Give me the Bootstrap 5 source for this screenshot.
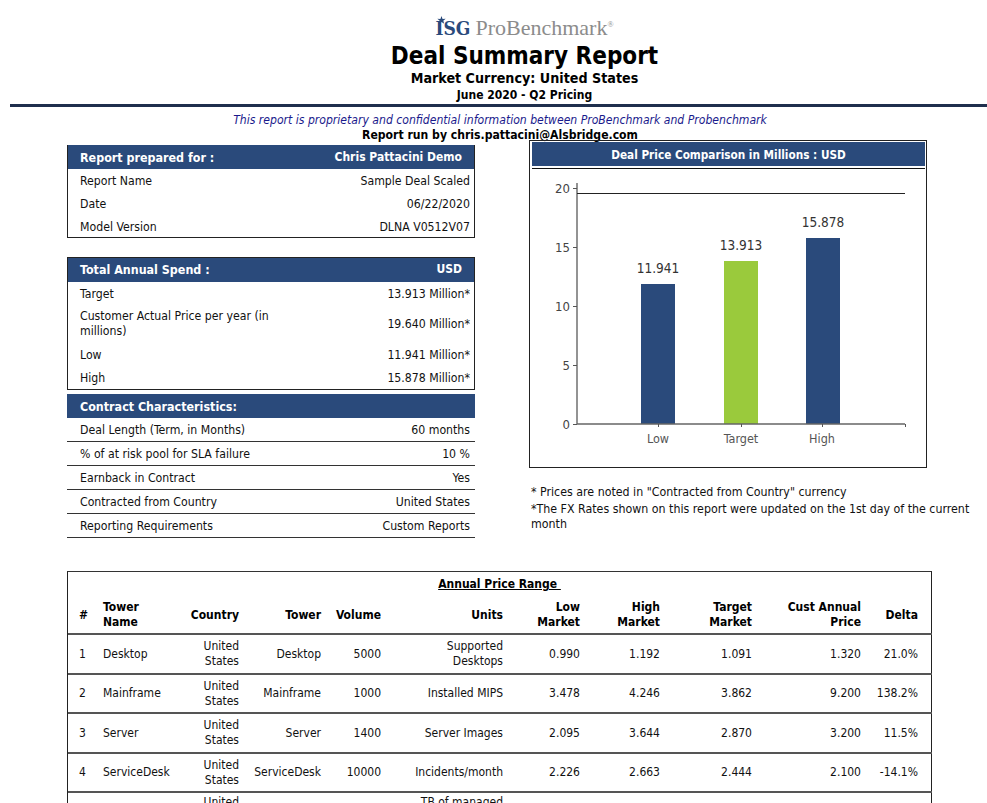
<!DOCTYPE html>
<html lang="en"><head><meta charset="utf-8"><title>Deal Summary Report</title>
<link href="https://cdn.jsdelivr.net/npm/bootstrap@5.3.0/dist/css/bootstrap.min.css" rel="stylesheet">
<style>
html,body{height:803px;overflow:hidden}
body{font-family:"DejaVu Sans Condensed","DejaVu Sans",sans-serif;font-size:12px;line-height:15px;color:#111;background:#fff}
.rep-top{padding-top:10px;padding-left:62px;text-align:center;height:104px}
.logo{height:31px;color:#8c8c8c;font:22px/36px "Liberation Serif",serif}
.logo-isg{position:relative;color:#2a4a7b;font:700 19px/36px "DejaVu Serif Condensed","DejaVu Serif",serif;margin-right:5px}
.logo-isg svg{position:absolute;left:1px;top:-1px}
.logo sup{font-size:8px;top:-1em}
.rep-title{font-size:24px;line-height:30px;font-weight:700;color:#000;margin:0;height:28px}
.rep-sub{font-size:14.2px;line-height:18px;font-weight:700;color:#000;margin:0 0 1px}
.rep-date{font-size:12px;line-height:15px;font-weight:700;color:#000;margin:0}
.rep-rule{height:3px;background:#1f2f4d;margin:0 0 6px 10px;opacity:1;border:0}
.rep-note{width:1000px;text-align:center;height:27px;font-size:12.1px}
.rep-note em{display:block;color:#1a1a8c}
.rep-note b{display:block;color:#000}
.cols{margin-left:67px;height:426px}
.left-col{width:408px;margin-top:5px}
.right-col{width:398px;margin-left:54px}
.pnl{border:1px solid #222;border-top:0}
.pnl-head{background:#2a4a7b;color:#fff;font-weight:700;padding:5px 12px 4px;height:24px}
.pnl-head span:first-child{font-size:12.4px}
.pnl-row{padding:5px 4px 3px 12px;min-height:23px;font-size:12.2px}
.pnl-row.align-items-center{padding:4px 4px 4px 12px}
.pnl-row .lbl{width:220px}
.pnl1{height:93px}
.pnl2{height:133px;margin-top:19px;border-top:1px solid #222}
.pnl2 .pnl-head{padding-top:4px}
.pnl3{margin-top:4px}
.pnl3 .pnl-head{padding-left:13px}
.pnl3 .pnl-row{border-bottom:1px solid #333;height:24px;padding:5px 5px 3px 13px}
.chart-box{border:1px solid #222;height:328px;padding:1px 1px 0 2px}
.chart-title{background:#2a4a7b;color:#fff;font-weight:700;text-align:center;height:24px;line-height:26px;margin-bottom:2px;font-size:11.7px}
.chart-line{height:1px;background:#111}
.chart-svg{display:block}
.chart-svg text{font-family:"DejaVu Sans Condensed","DejaVu Sans",sans-serif}
.foot-notes{margin-top:17px;margin-left:2px;width:450px;font-size:12.3px}
.foot-notes p{margin:0 0 2px}
.tbl-wrap{margin-left:67px;width:865px;border:1px solid #222;border-bottom:0;border-top:1px solid #333;height:300px;margin-top:5px}
.tbl-cap{height:25px;padding-top:5px;text-align:center;font-weight:700;color:#000;text-decoration:underline;white-space:pre}
.tbl-rep{table-layout:fixed;width:864px;margin:0;color:#111;--bs-table-bg:transparent}
.tbl-rep th,.tbl-rep td{padding:0;text-align:right;vertical-align:middle;border:0;border-bottom:2px solid #555;line-height:15px}
.tbl-rep th{height:37px;color:#000}
.tbl-rep tbody tr:nth-child(odd) td{height:40px}
.tbl-rep tbody tr:nth-child(even) td{height:39px}
.tbl-rep th:nth-child(-n+2),.tbl-rep td:nth-child(-n+2){text-align:left}
.tbl-rep th:first-child,.tbl-rep td:first-child{padding-left:11px}
.c1{width:35px}.c2{width:77px}.c3{width:59px}.c4{width:82px}.c5{width:60px}.c6{width:122px}.c7{width:77px}.c8{width:80px}.c9{width:92px}.c10{width:109px}.c11{width:57px}.c12{width:14px}
.tbl-rep .tc-units{padding-left:22px}
.tbl-rep .tc-ctry{padding-left:16px}
.tbl-rep td.tc-top{vertical-align:top;padding-top:2px}
</style></head><body>
<header class="rep-top">
<div class="logo"><span class="logo-isg"><svg width="9" height="9" viewBox="0 0 10 10" aria-hidden="true"><path fill="#2a4a7b" d="M5 0l1.2 3.2L9.6 3 7 5.2 8 8.6 5 6.7 2 8.6 3 5.2.4 3l3.4.2z"/></svg>ISG</span>ProBenchmark<sup>®</sup></div>
<h1 class="rep-title">Deal Summary Report</h1>
<p class="rep-sub">Market Currency: United States</p>
<p class="rep-date">June 2020 - Q2 Pricing</p>
</header>
<hr class="rep-rule">
<div class="rep-note"><em>This report is proprietary and confidential information between ProBenchmark and Probenchmark</em><b>Report run by chris.pattacini@Alsbridge.com</b></div>
<div class="cols d-flex">
<div class="left-col">
<section class="pnl pnl1">
<div class="pnl-head d-flex justify-content-between"><span>Report prepared for :</span><span>Chris Pattacini Demo</span></div>
<div class="pnl-row d-flex justify-content-between"><span>Report Name</span><span>Sample Deal Scaled</span></div>
<div class="pnl-row d-flex justify-content-between"><span>Date</span><span>06/22/2020</span></div>
<div class="pnl-row d-flex justify-content-between"><span>Model Version</span><span>DLNA V0512V07</span></div>
</section>
<section class="pnl pnl2">
<div class="pnl-head d-flex justify-content-between"><span>Total Annual Spend :</span><span>USD</span></div>
<div class="pnl-row d-flex justify-content-between"><span>Target</span><span>13.913 Million*</span></div>
<div class="pnl-row d-flex justify-content-between align-items-center"><span class="lbl">Customer Actual Price per year (in millions)</span><span>19.640 Million*</span></div>
<div class="pnl-row d-flex justify-content-between"><span>Low</span><span>11.941 Million*</span></div>
<div class="pnl-row d-flex justify-content-between"><span>High</span><span>15.878 Million*</span></div>
</section>
<section class="pnl3">
<div class="pnl-head"><span>Contract Characteristics:</span></div>
<div class="pnl-row d-flex justify-content-between"><span>Deal Length (Term, in Months)</span><span>60 months</span></div>
<div class="pnl-row d-flex justify-content-between"><span>% of at risk pool for SLA failure</span><span>10 %</span></div>
<div class="pnl-row d-flex justify-content-between"><span>Earnback in Contract</span><span>Yes</span></div>
<div class="pnl-row d-flex justify-content-between"><span>Contracted from Country</span><span>United States</span></div>
<div class="pnl-row d-flex justify-content-between"><span>Reporting Requirements</span><span>Custom Reports</span></div>
</section>
</div>
<div class="right-col">
<div class="chart-box">
<div class="chart-title">Deal Price Comparison in Millions : USD</div>
<div class="chart-line"></div>
<svg class="chart-svg" width="393" height="298" viewBox="532 169 393 298" role="img" aria-label="Deal price comparison bar chart">
<rect x="641" y="284" width="34" height="140" fill="#2a4a7b"/>
<rect x="724" y="261" width="34" height="163" fill="#9aca3c"/>
<rect x="806" y="238" width="34" height="186" fill="#2a4a7b"/>
<path d="M577 183V424M577 424H905" stroke="#666" stroke-width="1.4" fill="none"/>
<path d="M577 193.5H905" stroke="#222" stroke-width="1" fill="none"/>
<path d="M573 188.5h4M573 247.5h4M573 306.5h4M573 365.5h4M573 424.5h4M658.5 424v3M741.5 424v3M822.5 424v3M905.5 424v3" stroke="#555" stroke-width="1" fill="none"/>
<g font-size="13" fill="#444" text-anchor="end"><text x="570" y="193">20</text><text x="570" y="252">15</text><text x="570" y="311">10</text><text x="570" y="370">5</text><text x="570" y="429">0</text></g>
<g font-size="13.5" fill="#333" text-anchor="middle"><text x="658" y="273">11.941</text><text x="741" y="250">13.913</text><text x="823" y="227">15.878</text></g>
<g font-size="12.5" fill="#555" text-anchor="middle"><text x="658" y="443">Low</text><text x="741" y="443">Target</text><text x="822" y="443">High</text></g>
</svg>
</div>
<div class="foot-notes">
<p>* Prices are noted in "Contracted from Country" currency</p>
<p>*The FX Rates shown on this report were updated on the 1st day of the current month</p>
</div>
</div>
</div>
<div class="tbl-wrap">
<div class="tbl-cap">Annual Price Range </div>
<table class="table tbl-rep">
<colgroup><col class="c1"><col class="c2"><col class="c3"><col class="c4"><col class="c5"><col class="c6"><col class="c7"><col class="c8"><col class="c9"><col class="c10"><col class="c11"><col class="c12"></colgroup>
<thead><tr><th>#</th><th>Tower<br>Name</th><th>Country</th><th>Tower</th><th>Volume</th><th>Units</th><th>Low<br>Market</th><th>High<br>Market</th><th>Target<br>Market</th><th>Cust Annual<br>Price</th><th>Delta</th><th></th></tr></thead>
<tbody>
<tr><td>1</td><td>Desktop</td><td class="tc-ctry">United States</td><td>Desktop</td><td>5000</td><td class="tc-units">Supported Desktops</td><td>0.990</td><td>1.192</td><td>1.091</td><td>1.320</td><td>21.0%</td><td></td></tr>
<tr><td>2</td><td>Mainframe</td><td class="tc-ctry">United States</td><td>Mainframe</td><td>1000</td><td class="tc-units">Installed MIPS</td><td>3.478</td><td>4.246</td><td>3.862</td><td>9.200</td><td>138.2%</td><td></td></tr>
<tr><td>3</td><td>Server</td><td class="tc-ctry">United States</td><td>Server</td><td>1400</td><td class="tc-units">Server Images</td><td>2.095</td><td>3.644</td><td>2.870</td><td>3.200</td><td>11.5%</td><td></td></tr>
<tr><td>4</td><td>ServiceDesk</td><td class="tc-ctry">United States</td><td>ServiceDesk</td><td>10000</td><td class="tc-units">Incidents/month</td><td>2.226</td><td>2.663</td><td>2.444</td><td>2.100</td><td>-14.1%</td><td></td></tr>
<tr><td></td><td></td><td class="tc-ctry tc-top">United States</td><td></td><td></td><td class="tc-units tc-top">TB of managed storage</td><td></td><td></td><td></td><td></td><td></td><td></td></tr>
</tbody>
</table>
</div>
<script src="https://cdn.jsdelivr.net/npm/bootstrap@5.3.0/dist/js/bootstrap.bundle.min.js"></script>
</body></html>
